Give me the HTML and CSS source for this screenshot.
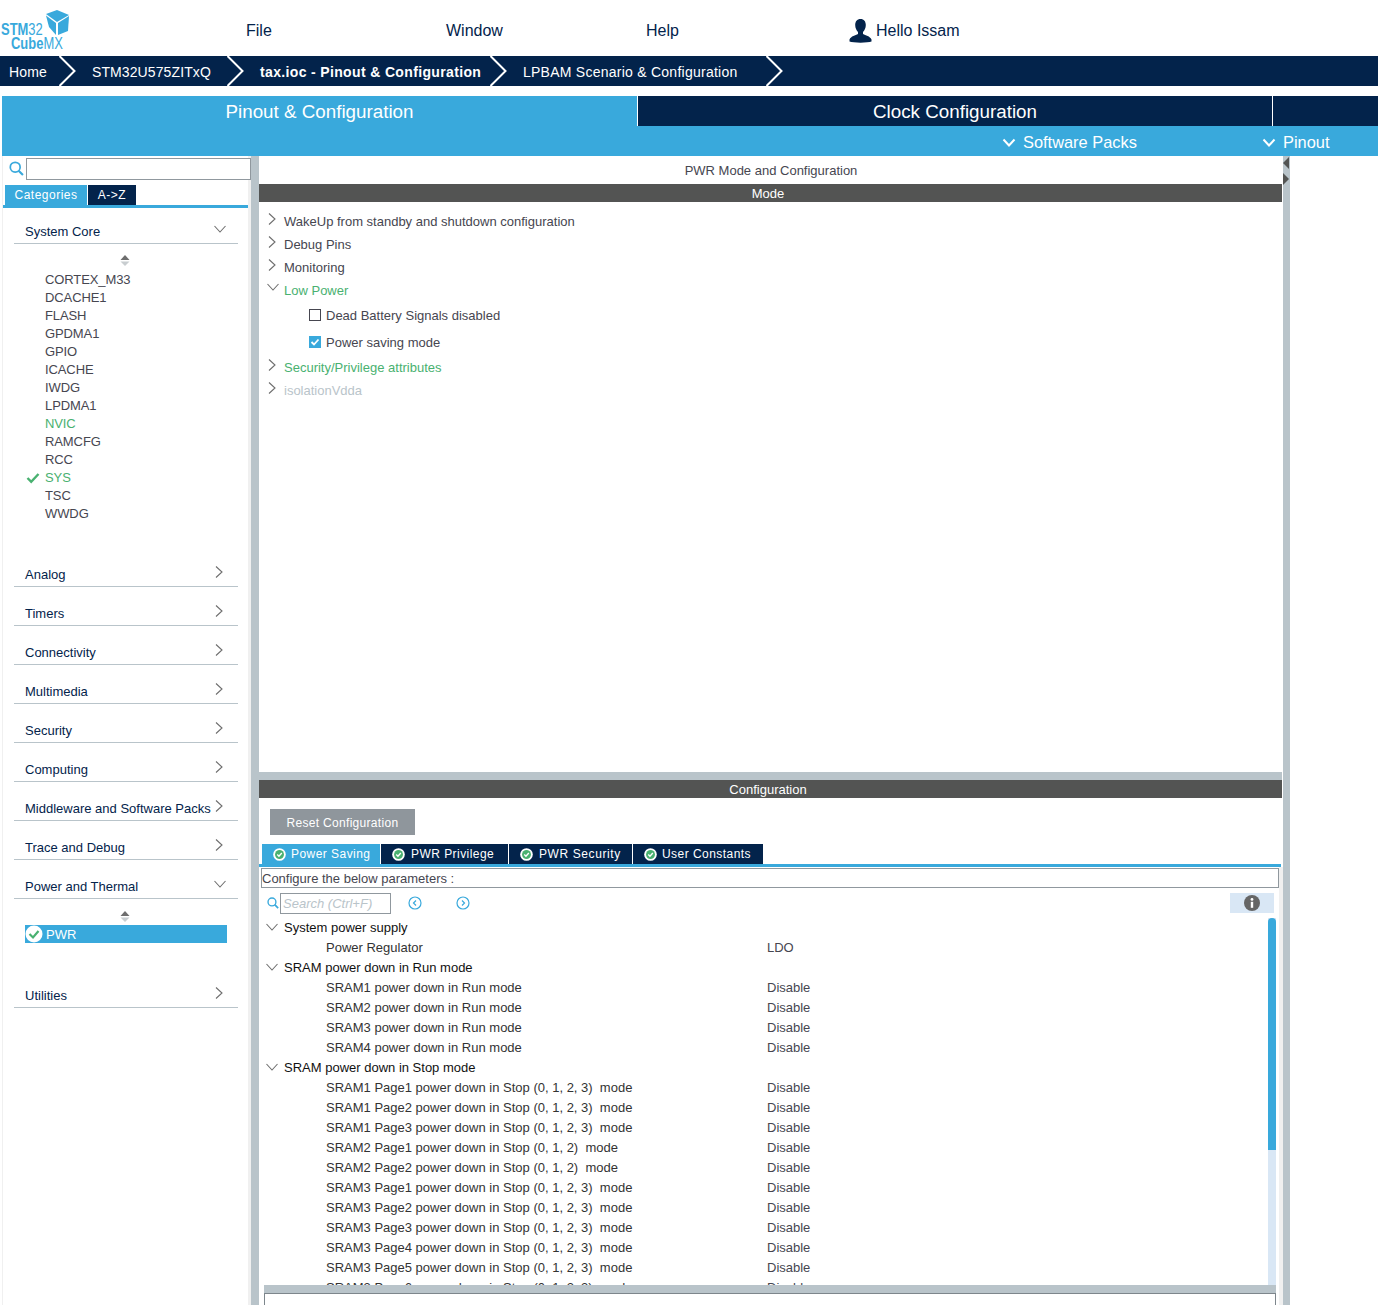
FILE: index.html
```html
<!DOCTYPE html>
<html lang="en">

<head>
    <meta charset="UTF-8">
    <title>STM32CubeMX</title>
    <link rel="stylesheet" href="styles.css">
</head>

<body>

    <svg class="defs" width="0" height="0">
        <symbol id="ch-right" viewBox="0 0 10 14"><path d="M2 1.5 8 7 2 12.5" fill="none" stroke="#6e6e6e" stroke-width="1.1"/></symbol>
        <symbol id="ch-down" viewBox="0 0 14 10"><path d="M1.5 2 7 8 12.5 2" fill="none" stroke="#6e6e6e" stroke-width="1.1"/></symbol>
        <symbol id="crumb" viewBox="0 0 17 30"><path d="M0.5 0 15.5 15 0.5 30" fill="none" stroke="#fff" stroke-width="2"/></symbol>
        <symbol id="sort" viewBox="0 0 10 11"><path d="M5 0 9.5 5H0.5z" fill="#6e6e6e"/><path d="M5 11 0.5 6.5H9.5z" fill="#c8cdd0"/></symbol>
        <symbol id="search" viewBox="0 0 14 14"><circle cx="5.8" cy="5.8" r="4.6" fill="none" stroke="#39a9dc" stroke-width="1.6"/><path d="M9 9 13 13" stroke="#39a9dc" stroke-width="2"/></symbol>
        <symbol id="ok" viewBox="0 0 14 14"><circle cx="7" cy="7" r="6.8" fill="#fff"/><circle cx="7" cy="7" r="4.8" fill="#49b170"/><path d="M4.6 7 6.4 8.8 9.5 5.4" fill="none" stroke="#fff" stroke-width="1.5"/></symbol>
    </svg>

    <!-- Top menu -->
    <header class="topbar">
        <div class="logo">
            <div class="logo-line"><b>STM</b>32</div>
            <div class="logo-line logo-indent"><b>Cube</b>MX</div>
            <svg class="logo-cube" width="24" height="26" viewBox="46 10 24 26">
                <path d="M46 14 57 10 69 15 57 22z" fill="#39a9dc"/>
                <path d="M46 15.500 56 23V35L49 27z" fill="#39a9dc"/>
                <path d="M58 23 69 16 68 31 58 35z" fill="#39a9dc"/>
            </svg>
        </div>
        <nav class="menu">
            <span class="menu-item">File</span>
            <span class="menu-item">Window</span>
            <span class="menu-item">Help</span>
            <span class="user">
                <svg width="23" height="24" viewBox="0 0 23 24"><path d="M11.500 0C15 0 16.800 2.600 16.800 6 16.800 9 15.500 11.500 14 13V15C16.500 16.500 21 17 22.500 20.500V22.500C19 24 4 24 0.500 22.500V20.500C2 17 6.500 16.500 9 15V13C7.500 11.500 6.200 9 6.200 6 6.200 2.600 8 0 11.500 0Z" fill="#03234b"/></svg>
                Hello Issam
            </span>
        </nav>
    </header>

    <!-- Breadcrumb -->
    <ul class="crumbs">
        <li class="crumb crumb-home">Home<svg width="17" height="30"><use href="#crumb"/></svg></li>
        <li class="crumb crumb-mcu">STM32U575ZITxQ<svg width="17" height="30"><use href="#crumb"/></svg></li>
        <li class="crumb crumb-file"><b>tax.ioc - Pinout &amp; Configuration</b><svg width="17" height="30"><use href="#crumb"/></svg></li>
        <li class="crumb crumb-lpbam">LPBAM Scenario &amp; Configuration<svg width="17" height="30"><use href="#crumb"/></svg></li>
    </ul>

    <!-- Main tabs -->
    <section class="maintabs">
        <div class="maintabs-row">
            <div class="maintab maintab-pinout">Pinout &amp; Configuration</div>
            <div class="maintab maintab-clock">Clock Configuration</div>
            <div class="maintab maintab-rest"></div>
        </div>
        <div class="subtabs">
            <span class="subtab subtab-packs"><svg width="14" height="10" viewBox="0 0 14 10"><path d="M1.500 1.500 7 7.500 12.500 1.500" fill="none" stroke="#fff" stroke-width="2"/></svg>Software Packs</span>
            <span class="subtab"><svg width="14" height="10" viewBox="0 0 14 10"><path d="M1.500 1.500 7 7.500 12.500 1.500" fill="none" stroke="#fff" stroke-width="2"/></svg>Pinout</span>
        </div>
    </section>

    <div class="workspace">

        <!-- Left panel -->
        <aside class="sidebar">
            <div class="side-search">
                <svg width="15" height="15" viewBox="0 0 14 14"><use href="#search"/></svg>
                <div class="side-input"></div>
            </div>
            <div class="side-tabs">
                <span class="side-tab active">Categories</span>
                <span class="side-tab">A-&gt;Z</span>
            </div>
            <div class="cats">
                <div class="cat">System Core<svg class="cat-open" width="14" height="10"><use href="#ch-down"/></svg></div>
                <div class="sublist sublist-core">
                    <svg class="sort" width="10" height="11"><use href="#sort"/></svg>
                    <div class="sub">CORTEX_M33</div>
                    <div class="sub">DCACHE1</div>
                    <div class="sub">FLASH</div>
                    <div class="sub">GPDMA1</div>
                    <div class="sub">GPIO</div>
                    <div class="sub">ICACHE</div>
                    <div class="sub">IWDG</div>
                    <div class="sub">LPDMA1</div>
                    <div class="sub green">NVIC</div>
                    <div class="sub">RAMCFG</div>
                    <div class="sub">RCC</div>
                    <div class="sub green checked"><svg width="14" height="12" viewBox="0 0 14 12"><path d="M1.500 6 5.200 9.800 12.500 2" fill="none" stroke="#49b170" stroke-width="2.400"/></svg>SYS</div>
                    <div class="sub">TSC</div>
                    <div class="sub">WWDG</div>
                </div>
                <div class="cat">Analog<svg width="10" height="14"><use href="#ch-right"/></svg></div>
                <div class="cat">Timers<svg width="10" height="14"><use href="#ch-right"/></svg></div>
                <div class="cat">Connectivity<svg width="10" height="14"><use href="#ch-right"/></svg></div>
                <div class="cat">Multimedia<svg width="10" height="14"><use href="#ch-right"/></svg></div>
                <div class="cat">Security<svg width="10" height="14"><use href="#ch-right"/></svg></div>
                <div class="cat">Computing<svg width="10" height="14"><use href="#ch-right"/></svg></div>
                <div class="cat">Middleware and Software Packs<svg width="10" height="14"><use href="#ch-right"/></svg></div>
                <div class="cat">Trace and Debug<svg width="10" height="14"><use href="#ch-right"/></svg></div>
                <div class="cat">Power and Thermal<svg class="cat-open" width="14" height="10"><use href="#ch-down"/></svg></div>
                <div class="sublist sublist-power">
                    <svg class="sort" width="10" height="11"><use href="#sort"/></svg>
                    <div class="sub-selected">
                        <svg width="18" height="18" viewBox="0 0 18 18"><circle cx="9" cy="9" r="8.500" fill="#fff"/><path d="M4.500 9 8 12.500 13.500 6" fill="none" stroke="#49b170" stroke-width="2.200"/></svg>
                        PWR
                    </div>
                </div>
                <div class="cat">Utilities<svg width="10" height="14"><use href="#ch-right"/></svg></div>
            </div>
        </aside>

        <div class="vsplit"></div>

        <!-- Mode and configuration -->
        <main class="content">
            <section class="mode-pane">
                <div class="pane-title">PWR Mode and Configuration</div>
                <div class="bar">Mode</div>
                <div class="mode-tree">
                    <div class="node"><svg width="10" height="14"><use href="#ch-right"/></svg>WakeUp from standby and shutdown configuration</div>
                    <div class="node"><svg width="10" height="14"><use href="#ch-right"/></svg>Debug Pins</div>
                    <div class="node"><svg width="10" height="14"><use href="#ch-right"/></svg>Monitoring</div>
                    <div class="node green open"><svg width="14" height="10"><use href="#ch-down"/></svg>Low Power</div>
                    <label class="check"><span class="box"></span>Dead Battery Signals disabled</label>
                    <label class="check"><span class="box on"><svg width="12" height="12" viewBox="0 0 12 12"><path d="M2.500 6 5 8.500 9.500 3.500" fill="none" stroke="#fff" stroke-width="1.800"/></svg></span>Power saving mode</label>
                    <div class="node green"><svg width="10" height="14"><use href="#ch-right"/></svg>Security/Privilege attributes</div>
                    <div class="node muted"><svg width="10" height="14"><use href="#ch-right"/></svg>isolationVdda</div>
                </div>
            </section>

            <div class="hsplit"></div>

            <section class="config-pane">
                <div class="bar">Configuration</div>
                <button class="reset">Reset Configuration</button>
                <div class="cfg-tabs">
                    <span class="cfg-tab active t1"><svg width="13" height="13" viewBox="0 0 14 14"><use href="#ok"/></svg>Power Saving</span>
                    <span class="cfg-tab t2"><svg width="13" height="13" viewBox="0 0 14 14"><use href="#ok"/></svg>PWR Privilege</span>
                    <span class="cfg-tab t3"><svg width="13" height="13" viewBox="0 0 14 14"><use href="#ok"/></svg>PWR Security</span>
                    <span class="cfg-tab t4"><svg width="13" height="13" viewBox="0 0 14 14"><use href="#ok"/></svg>User Constants</span>
                </div>
                <div class="cfg-body">
                    <div class="cfg-note">Configure the below parameters :</div>
                    <div class="cfg-search">
                        <svg width="12" height="12" viewBox="0 0 14 14"><use href="#search"/></svg>
                        <div class="cfg-input">Search (Ctrl+F)</div>
                        <svg class="nav-prev" width="14" height="14" viewBox="0 0 14 14"><circle cx="7" cy="7" r="6" fill="none" stroke="#39a9dc" stroke-width="1.200"/><path d="M8 4.500 5.500 7 8 9.500" fill="none" stroke="#39a9dc" stroke-width="1.200"/></svg>
                        <svg class="nav-next" width="14" height="14" viewBox="0 0 14 14"><circle cx="7" cy="7" r="6" fill="none" stroke="#39a9dc" stroke-width="1.200"/><path d="M6 4.500 8.500 7 6 9.500" fill="none" stroke="#39a9dc" stroke-width="1.200"/></svg>
                        <div class="info"><svg width="16" height="16" viewBox="0 0 16 16"><circle cx="8" cy="8" r="8" fill="#666"/><rect x="6.800" y="6.800" width="2.400" height="6" fill="#fff"/><circle cx="8" cy="4.400" r="1.400" fill="#fff"/></svg></div>
                    </div>
                    <div class="params">
                        <div class="param-list">
                            <div class="group"><svg width="14" height="10"><use href="#ch-down"/></svg>System power supply</div>
                            <div class="param"><span>Power Regulator</span><span>LDO</span></div>
                            <div class="group"><svg width="14" height="10"><use href="#ch-down"/></svg>SRAM power down in Run mode</div>
                            <div class="param"><span>SRAM1 power down in Run mode</span><span>Disable</span></div>
                            <div class="param"><span>SRAM2 power down in Run mode</span><span>Disable</span></div>
                            <div class="param"><span>SRAM3 power down in Run mode</span><span>Disable</span></div>
                            <div class="param"><span>SRAM4 power down in Run mode</span><span>Disable</span></div>
                            <div class="group"><svg width="14" height="10"><use href="#ch-down"/></svg>SRAM power down in Stop mode</div>
                            <div class="param"><span>SRAM1 Page1 power down in Stop (0, 1, 2, 3)  mode</span><span>Disable</span></div>
                            <div class="param"><span>SRAM1 Page2 power down in Stop (0, 1, 2, 3)  mode</span><span>Disable</span></div>
                            <div class="param"><span>SRAM1 Page3 power down in Stop (0, 1, 2, 3)  mode</span><span>Disable</span></div>
                            <div class="param"><span>SRAM2 Page1 power down in Stop (0, 1, 2)  mode</span><span>Disable</span></div>
                            <div class="param"><span>SRAM2 Page2 power down in Stop (0, 1, 2)  mode</span><span>Disable</span></div>
                            <div class="param"><span>SRAM3 Page1 power down in Stop (0, 1, 2, 3)  mode</span><span>Disable</span></div>
                            <div class="param"><span>SRAM3 Page2 power down in Stop (0, 1, 2, 3)  mode</span><span>Disable</span></div>
                            <div class="param"><span>SRAM3 Page3 power down in Stop (0, 1, 2, 3)  mode</span><span>Disable</span></div>
                            <div class="param"><span>SRAM3 Page4 power down in Stop (0, 1, 2, 3)  mode</span><span>Disable</span></div>
                            <div class="param"><span>SRAM3 Page5 power down in Stop (0, 1, 2, 3)  mode</span><span>Disable</span></div>
                            <div class="param"><span>SRAM3 Page6 power down in Stop (0, 1, 2, 3)  mode</span><span>Disable</span></div>
                        </div>
                        <div class="scrollbar"><div class="thumb"></div></div>
                    </div>
                    <div class="bottom-split"></div>
                    <div class="bottom-box"></div>
                </div>
            </section>
        </main>

        <div class="rightsplit">
            <svg width="6" height="12" viewBox="0 0 6 12"><path d="M6 0V12L0 6z" fill="#535453"/></svg>
            <svg width="6" height="12" viewBox="0 0 6 12"><path d="M0 0V12L6 6z" fill="#535453"/></svg>
        </div>
    </div>

</body>

</html>
```

FILE: styles.css
```css
* {
    box-sizing: border-box;
}

html,
body {
    margin: 0;
    padding: 0;
    height: 1305px;
    overflow: hidden;
}

body {
    font-family: "Liberation Sans", Arial, sans-serif;
    font-size: 13px;
    color: #464650;
    background-color: white;
}

.defs {
    display: block;
    height: 0;
}

svg {
    flex: none;
}

.green {
    color: #49b170;
}

.muted {
    color: #b9c4ca;
}

/* Top menu */
.topbar {
    display: flex;
    height: 56px;
    color: #03234b;
    font-size: 16px;
}

.logo {
    position: relative;
    width: 246px;
    padding-top: 23px;
    padding-left: 1px;
    color: #39a9dc;
    font-size: 16px;
    line-height: 14px;
}

.logo-line {
    transform: scaleX(0.81);
    transform-origin: left;
}

.logo-indent {
    margin-left: 10px;
}

.logo-cube {
    position: absolute;
    left: 46px;
    top: 10px;
}

.menu {
    display: flex;
    align-items: center;
    padding-top: 6px;
}

.menu-item {
    width: 200px;
}

.user {
    display: flex;
    align-items: center;
    gap: 4px;
    margin-left: 3px;
}

/* Breadcrumb */
.crumbs {
    display: flex;
    height: 30px;
    margin: 0;
    padding: 0;
    list-style: none;
    font-size: 14px;
    color: white;
    background-color: #03234b;
}

.crumb {
    display: flex;
    align-items: center;
    justify-content: space-between;
    padding-top: 2px;
    padding-left: 16px;
}

.crumb svg {
    margin-top: -2px;
}

.crumb b {
    letter-spacing: 0.35px;
}

.crumb-home {
    width: 76px;
    padding-left: 9px;
    letter-spacing: 0.15px;
}

.crumb-mcu {
    width: 168px;
    letter-spacing: 0.1px;
}

.crumb-file {
    width: 263px;
}

.crumb-lpbam {
    width: 276px;
    letter-spacing: 0.25px;
}

/* Main tabs */
.maintabs {
    margin: 10px 0 0 2px;
    color: white;
    background-color: #39a9dc;
}

.maintabs-row {
    display: flex;
    height: 30px;
    font-size: 18.800px;
}

.maintab {
    display: flex;
    align-items: center;
    justify-content: center;
    padding-top: 1px;
}

.maintab-pinout {
    width: 635px;
}

.maintab-clock {
    width: 636px;
    background-color: #03234b;
    border-left: 1px solid white;
    border-right: 1px solid white;
}

.maintab-rest {
    flex: 1;
    background-color: #03234b;
}

.subtabs {
    display: flex;
    height: 30px;
    padding-left: 1000px;
    font-size: 16.400px;
}

.subtab {
    display: flex;
    align-items: center;
    gap: 7px;
    padding-top: 3px;
}

.subtab-packs {
    width: 260px;
}

/* Workspace */
.workspace {
    display: flex;
    height: 1149px;
    padding-left: 2px;
}

.sidebar {
    width: 249px;
    border-left: 1px solid #f0f0f0;
    border-right: 3px solid #f0f0f0;
}

.side-search {
    display: flex;
    align-items: center;
    gap: 2px;
    height: 29px;
    padding: 0 0 4px 6px;
}

.side-input {
    flex: none;
    width: 225px;
    height: 22px;
    margin-right: -4px;
    background-color: white;
    border: 1px solid #90989e;
    position: relative;
}

.side-tabs {
    display: flex;
    gap: 1px;
    height: 23px;
    padding-left: 2px;
    border-bottom: 3px solid #39a9dc;
    color: white;
    font-size: 12px;
    letter-spacing: 0.5px;
}

.side-tab {
    display: flex;
    align-items: center;
    justify-content: center;
    width: 48px;
    background-color: #03234b;
}

.side-tab.active {
    width: 82px;
    background-color: #39a9dc;
}

.cats {
    padding: 0 10px 0 11px;
    color: #03234b;
}

.cat {
    display: flex;
    align-items: flex-start;
    justify-content: space-between;
    height: 36px;
    margin-top: 3px;
    padding: 15px 14px 0 11px;
    line-height: 18px;
    white-space: nowrap;
    border-bottom: 1px solid #b9c4ca;
}

.cat:first-child {
    margin-top: 0;
}

.cat svg {
    margin-top: -1px;
}

.cat svg.cat-open {
    margin: 1px -3px 0 0;
}

.sublist {
    position: relative;
    color: #464650;
}

.sublist-core {
    height: 304px;
    padding-top: 11px;
}

.sublist-core .sort {
    margin-bottom: 5px;
}

.sublist-power {
    height: 70px;
    padding-top: 12px;
}

.sort {
    display: block;
    margin: 0 0 3px 106px;
}

.sub {
    height: 18px;
    padding-left: 31px;
    line-height: 18px;
    letter-spacing: -0.1px;
}

.sub.green {
    color: #49b170;
}

.checked {
    display: flex;
    align-items: center;
    margin-left: -19px;
    padding-left: 31px;
}

.checked svg {
    margin-right: 5px;
}

.sub-selected {
    display: flex;
    align-items: center;
    gap: 3px;
    width: 202px;
    height: 18px;
    margin-left: 11px;
    color: white;
    background-color: #39a9dc;
}

.vsplit {
    width: 8px;
    background-color: #b9c4ca;
}

/* Content */
.content {
    display: flex;
    flex-direction: column;
    width: 1024px;
}

.mode-pane {
    height: 616px;
}

.pane-title {
    height: 28px;
    padding-top: 6px;
    text-align: center;
    line-height: 18px;
}

.bar {
    flex: none;
    height: 18px;
    margin-right: 1px;
    padding-right: 5px;
    padding-top: 1px;
    line-height: 18px;
    text-align: center;
    color: white;
    background-color: #535453;
}

.mode-tree {
    padding-top: 8px;
}

.node {
    display: flex;
    align-items: center;
    height: 23px;
    padding-left: 25px;
    padding-bottom: 1px;
}

.node svg {
    margin: -5px 7px 0 -17px;
}

.node.open svg {
    margin: -6px 4px 0 -18px;
}

.check {
    display: flex;
    align-items: center;
    gap: 5px;
    height: 27px;
    padding-left: 50px;
    padding-bottom: 1px;
}

.box {
    display: block;
    width: 12px;
    height: 12px;
    border: 1px solid #464650;
}

.box.on {
    border: 0;
    background-color: #39a9dc;
}

.box svg {
    display: block;
}

.hsplit {
    height: 8px;
    margin-right: 1px;
    background-color: #b9c4ca;
}

/* Configuration */
.config-pane {
    flex: 1;
    display: flex;
    flex-direction: column;
    min-height: 0;
    overflow: hidden;
}

.reset {
    flex: none;
    width: 145px;
    height: 26px;
    margin: 11px 0 9px 11px;
    padding: 2px 0 0;
    font: 12px "Liberation Sans", Arial, sans-serif;
    letter-spacing: 0.3px;
    color: white;
    background-color: #8f969c;
    border: 0;
}

.cfg-tabs {
    display: flex;
    flex: none;
    gap: 1px;
    width: 1022px;
    height: 23px;
    padding-left: 3px;
    border-bottom: 3px solid #39a9dc;
    color: white;
    font-size: 12px;
    letter-spacing: 0.45px;
}

.cfg-tab {
    display: flex;
    align-items: center;
    gap: 5px;
    padding-left: 11px;
    background-color: #03234b;
}

.cfg-tab.active {
    background-color: #39a9dc;
}

.t1 {
    width: 118px;
}

.t2 {
    width: 127px;
    gap: 6px;
}

.t3 {
    width: 123px;
    gap: 6px;
    letter-spacing: 0.6px;
}

.t4 {
    width: 130px;
}

.cfg-body {
    flex: 1;
    min-height: 0;
    display: flex;
    flex-direction: column;
    border-right: 4px solid #f0f0f0;
}

.cfg-note {
    flex: none;
    width: 1018px;
    height: 20px;
    margin: 1px 0 0 2px;
    border: 1px solid #90989e;
    padding-top: 1px;
    line-height: 18px;
    white-space: nowrap;
}

.cfg-search {
    display: flex;
    flex: none;
    align-items: center;
    height: 20px;
    margin-top: 5px;
    padding-left: 8px;
}

.cfg-input {
    width: 111px;
    height: 21px;
    margin-left: 1px;
    border: 1px solid #90989e;
    padding-left: 2px;
    line-height: 19px;
    font-style: italic;
    color: #b9c4ca;
}

.nav-prev {
    margin-left: 17px;
}

.nav-next {
    margin-left: 34px;
}

.info {
    display: flex;
    align-items: center;
    justify-content: center;
    width: 44px;
    height: 20px;
    margin-left: 760px;
    background-color: #d9e7f5;
}

.params {
    display: flex;
    flex: none;
    height: 368px;
    margin-top: 4px;
    overflow: hidden;
}

.param-list {
    width: 1009px;
}

.group {
    display: flex;
    align-items: center;
    height: 20px;
    padding-left: 6px;
    color: #111;
}

.group svg {
    margin-right: 5px;
}

.param {
    display: flex;
    height: 20px;
    padding-left: 67px;
    line-height: 22px;
    color: #333;
    white-space: pre;
}

.param span:first-child {
    width: 441px;
}

.param span:last-child {
    color: #464650;
}

.scrollbar {
    width: 8px;
    height: 368px;
    margin-top: 1px;
    background-color: #d9e7f5;
}

.thumb {
    height: 232px;
    background-color: #39a9dc;
    border-radius: 4px 4px 0 0;
}

.bottom-split {
    flex: none;
    width: 1012px;
    height: 8px;
    margin-left: 5px;
    background-color: #b9c4ca;
}

.bottom-box {
    flex: 1;
    width: 1012px;
    margin-left: 5px;
    border: 1px solid #7d868c;
    border-bottom: 0;
}

.rightsplit {
    display: flex;
    flex-direction: column;
    gap: 4px;
    width: 7px;
    padding-top: 1px;
    background-color: #b9c4ca;
}
```
